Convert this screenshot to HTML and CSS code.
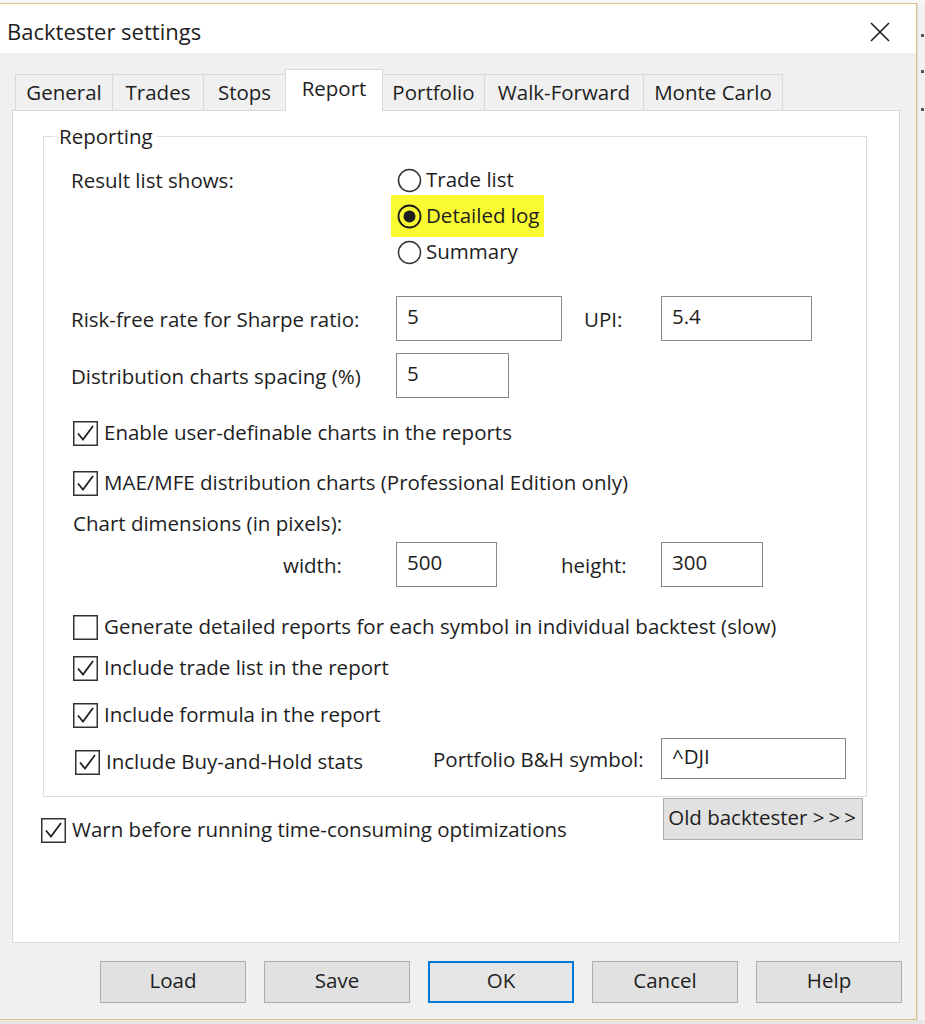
FILE: index.html
```html
<!DOCTYPE html>
<html lang="en">
<head>
  <meta charset="UTF-8">
  <title>Backtester settings</title>
  <link rel="stylesheet" href="styles.css">
</head>
<body>

<div class="desk-top"></div>

<div class="screen">
  <div class="window">

    <div class="titlebar">
      <span class="title">Backtester settings</span>
      <svg class="close" width="20" height="20" viewBox="0 0 20 20">
        <path d="M1 1 L19 19 M19 1 L1 19" stroke="#1e1e1e" stroke-width="1.6" fill="none"/>
      </svg>
    </div>

    <div class="client">

      <div class="tabs">
        <div class="tab t-general">General</div>
        <div class="tab t-trades">Trades</div>
        <div class="tab t-stops">Stops</div>
        <div class="tab t-report active">Report</div>
        <div class="tab t-portfolio">Portfolio</div>
        <div class="tab t-walk">Walk-Forward</div>
        <div class="tab t-monte">Monte Carlo</div>
      </div>

      <div class="panel">

        <div class="group">
          <span class="legend">Reporting</span>

          <div class="row r-result">
            <div class="label">Result list shows:</div>
            <div class="radios">
              <div class="radio">
                <svg width="25" height="25" viewBox="0 0 25 25"><circle cx="12.5" cy="12.5" r="11" fill="#fff" stroke="#333" stroke-width="1.5"/></svg>
                <span>Trade list</span>
              </div>
              <div class="radio checked">
                <svg width="25" height="25" viewBox="0 0 25 25"><circle cx="12.5" cy="12.5" r="11" fill="none" stroke="#1a1a1a" stroke-width="1.8"/><circle cx="12.5" cy="12.5" r="6" fill="#1e1e1e"/></svg>
                <span>Detailed log</span>
              </div>
              <div class="radio">
                <svg width="25" height="25" viewBox="0 0 25 25"><circle cx="12.5" cy="12.5" r="11" fill="#fff" stroke="#333" stroke-width="1.5"/></svg>
                <span>Summary</span>
              </div>
            </div>
          </div>

          <div class="row r-rate">
            <div class="label">Risk-free rate for Sharpe ratio:</div>
            <input class="field f-rate" type="text" value="5">
            <div class="label l-upi">UPI:</div>
            <input class="field f-upi" type="text" value="5.4">
          </div>

          <div class="row r-spacing">
            <div class="label">Distribution charts spacing (%)</div>
            <input class="field f-spacing" type="text" value="5">
          </div>

          <div class="check r-user">
            <svg class="box" width="25" height="25" viewBox="0 0 25 25"><rect x="0.75" y="0.75" width="23.5" height="23.5" fill="#fff" stroke="#333" stroke-width="1.5"/><polyline points="5,12.5 10,18.5 20,5" fill="none" stroke="#222" stroke-width="1.8"/></svg>
            <span>Enable user-definable charts in the reports</span>
          </div>

          <div class="check r-mae">
            <svg class="box" width="25" height="25" viewBox="0 0 25 25"><rect x="0.75" y="0.75" width="23.5" height="23.5" fill="#fff" stroke="#333" stroke-width="1.5"/><polyline points="5,12.5 10,18.5 20,5" fill="none" stroke="#222" stroke-width="1.8"/></svg>
            <span>MAE/MFE distribution charts (Professional Edition only)</span>
          </div>

          <div class="row r-dims">
            <div class="label">Chart dimensions (in pixels):</div>
          </div>

          <div class="row r-size">
            <div class="label l-width">width:</div>
            <input class="field f-width" type="text" value="500">
            <div class="label l-height">height:</div>
            <input class="field f-height" type="text" value="300">
          </div>

          <div class="check r-each">
            <svg class="box" width="25" height="25" viewBox="0 0 25 25"><rect x="0.75" y="0.75" width="23.5" height="23.5" fill="#fff" stroke="#333" stroke-width="1.5"/></svg>
            <span>Generate detailed reports for each symbol in individual backtest (slow)</span>
          </div>

          <div class="check r-trades">
            <svg class="box" width="25" height="25" viewBox="0 0 25 25"><rect x="0.75" y="0.75" width="23.5" height="23.5" fill="#fff" stroke="#333" stroke-width="1.5"/><polyline points="5,12.5 10,18.5 20,5" fill="none" stroke="#222" stroke-width="1.8"/></svg>
            <span>Include trade list in the report</span>
          </div>

          <div class="check r-formula">
            <svg class="box" width="25" height="25" viewBox="0 0 25 25"><rect x="0.75" y="0.75" width="23.5" height="23.5" fill="#fff" stroke="#333" stroke-width="1.5"/><polyline points="5,12.5 10,18.5 20,5" fill="none" stroke="#222" stroke-width="1.8"/></svg>
            <span>Include formula in the report</span>
          </div>

          <div class="row r-bh">
            <div class="check c-bh">
              <svg class="box" width="25" height="25" viewBox="0 0 25 25"><rect x="0.75" y="0.75" width="23.5" height="23.5" fill="#fff" stroke="#333" stroke-width="1.5"/><polyline points="5,12.5 10,18.5 20,5" fill="none" stroke="#222" stroke-width="1.8"/></svg>
              <span>Include Buy-and-Hold stats</span>
            </div>
            <div class="label l-symbol">Portfolio B&amp;H symbol:</div>
            <input class="field f-symbol" type="text" value="^DJI">
          </div>
        </div>

        <div class="below">
          <div class="check c-warn">
            <svg class="box" width="25" height="25" viewBox="0 0 25 25"><rect x="0.75" y="0.75" width="23.5" height="23.5" fill="#fff" stroke="#333" stroke-width="1.5"/><polyline points="5,12.5 10,18.5 20,5" fill="none" stroke="#222" stroke-width="1.8"/></svg>
            <span>Warn before running time-consuming optimizations</span>
          </div>
          <button class="btn old">Old backtester <span class="arrows">&gt;&gt;&gt;</span></button>
        </div>

      </div>

      <div class="buttons">
        <button class="btn">Load</button>
        <button class="btn">Save</button>
        <button class="btn default">OK</button>
        <button class="btn">Cancel</button>
        <button class="btn">Help</button>
      </div>

    </div>
  </div>
  <div class="desk-right">
    <span class="dot d1"></span>
    <span class="dot d2"></span>
    <span class="dot d3"></span>
  </div>
</div>

<div class="desk-bottom"></div>

</body>
</html>
```

FILE: styles.css
```css
body {
  margin: 0;
  width: 925px;
  height: 1024px;
  overflow: hidden;
  background: #ececec;
  font-family: "Open Sans", "Noto Sans", sans-serif;
  font-size: 20.5px;
  color: #1e1e1e;
}
.desk-top {
  height: 3px;
  background: #f6f6f6;
}
.screen {
  display: flex;
}
.window {
  width: 916px;
  height: 1015px;
  border-top: 1px solid #e2bf86;
  border-right: 1px solid #e2bf86;
  border-bottom: 1px solid #e2bf86;
  background: #f0f0f0;
  display: flex;
  flex-direction: column;
}
.desk-right {
  flex: 1;
  background: #f2f2f2;
  border-left: 1px solid #dedede;
  position: relative;
}
.dot {
  position: absolute;
  left: 3px;
  width: 3px;
  height: 3px;
  background: #555;
}
.d1 { top: 31px; }
.d2 { top: 67px; }
.d3 { top: 105px; }
.desk-bottom {
  height: 5px;
  background: #e6e6e6;
}

/* title bar */
.titlebar {
  height: 49px;
  background: #fff;
  display: flex;
  align-items: center;
  justify-content: space-between;
  padding: 0 26px 0 7px;
}
.title {
  font-size: 22px;
  margin-top: 4px;
}
.close {
  margin-top: 6px;
}

/* client area */
.client {
  flex: 1;
  padding-left: 12px;
}
.tabs {
  display: flex;
  align-items: flex-end;
  height: 41px;
  margin-top: 16px;
  padding-left: 3px;
}
.tab {
  height: 36px;
  line-height: 34px;
  border: 1px solid #d9d9d9;
  border-bottom: none;
  margin-right: -1px;
  background: #f0f0f0;
  text-align: center;
  box-sizing: border-box;
}
.tab.active {
  height: 42px;
  line-height: 36px;
  margin-bottom: -1px;
  background: #fff;
  position: relative;
  z-index: 1;
}
.t-general { width: 98px; }
.t-trades { width: 92px; }
.t-stops { width: 83px; }
.t-report { width: 98px; }
.t-portfolio { width: 103px; }
.t-walk { width: 160px; }
.t-monte { width: 140px; }

.panel {
  width: 888px;
  height: 833px;
  box-sizing: border-box;
  border: 1px solid #d9d9d9;
  background: #fff;
}

/* group box */
.group {
  position: relative;
  width: 824px;
  height: 661px;
  box-sizing: border-box;
  margin: 25px 0 0 30px;
  border: 1px solid #dcdcdc;
  padding: 25px 0 0 27px;
}
.legend {
  position: absolute;
  top: -15px;
  left: 11px;
  padding: 0 4px;
  background: #fff;
}
.row {
  display: flex;
  align-items: center;
}
.label {
  width: 325px;
  flex-shrink: 0;
}
.field {
  box-sizing: border-box;
  height: 45px;
  border: 1px solid #8a8a8a;
  padding: 0 0 6px 10px;
  font: inherit;
  color: #1e1e1e;
  background: #fff;
  outline: none;
}
.f-rate { width: 166px; }
.f-upi { width: 151px; }
.f-spacing { width: 113px; }
.f-width { width: 101px; }
.f-height { width: 102px; }
.f-symbol { width: 185px; height: 41px; }

.r-result {
  align-items: flex-start;
  height: 108px;
}
.r-result .label {
  line-height: 36px;
}
.radios {
  margin-left: 1px;
}
.radio {
  display: flex;
  align-items: center;
  height: 36px;
  gap: 4px;
}
.radio.checked {
  background: #fafa32;
  margin-left: -6px;
  padding-left: 6px;
  width: 147px;
  height: 42px;
  margin-top: -3px;
  margin-bottom: -3px;
}
.radio span {
  margin-top: -3px;
}

.r-rate { margin-top: 26px; height: 45px; }
.l-upi { width: 77px; margin-left: 22px; }
.r-spacing { margin-top: 12px; height: 45px; }

.check {
  display: flex;
  align-items: center;
  gap: 6px;
  height: 36px;
}
.check span {
  margin-top: -3px;
}
.check .box {
  flex-shrink: 0;
}
.group > .check {
  margin-left: 2px;
}
.r-user { margin-top: 17px; }
.r-mae { margin-top: 14px; }
.r-dims { margin-top: 4px; height: 36px; }
.r-dims .label { width: auto; margin-left: 2px; }
.r-size { margin-top: 1px; height: 45px; }
.l-width { width: 113px; padding-left: 212px; }
.l-height { width: 100px; margin-left: 64px; }
.r-each { margin-top: 22px; }
.r-trades { margin-top: 5px; }
.r-formula { margin-top: 11px; }
.r-bh { margin-top: 5px; height: 41px; }
.c-bh { width: 358px; margin-left: 4px; margin-top: 8px; }
.l-symbol { width: 228px; }

/* under the group */
.below {
  display: flex;
  justify-content: space-between;
  align-items: flex-start;
  margin-left: 28px;
  width: 822px;
}
.c-warn {
  margin-top: 15px;
}

/* buttons */
.btn {
  height: 42px;
  width: 146px;
  box-sizing: border-box;
  border: 1px solid #adadad;
  background: #e1e1e1;
  font: inherit;
  color: #1e1e1e;
  padding: 0 0 4px 0;
}
.btn.default {
  border: 2px solid #0078d7;
  background: #e5e5e5;
}
.old {
  width: 200px;
  margin-top: 1px;
  white-space: nowrap;
  overflow: hidden;
  text-align: right;
  padding-right: 2px;
}
.arrows {
  letter-spacing: 4px;
}
.buttons {
  display: flex;
  justify-content: flex-end;
  gap: 18px;
  width: 890px;
  margin-top: 18px;
}
```
